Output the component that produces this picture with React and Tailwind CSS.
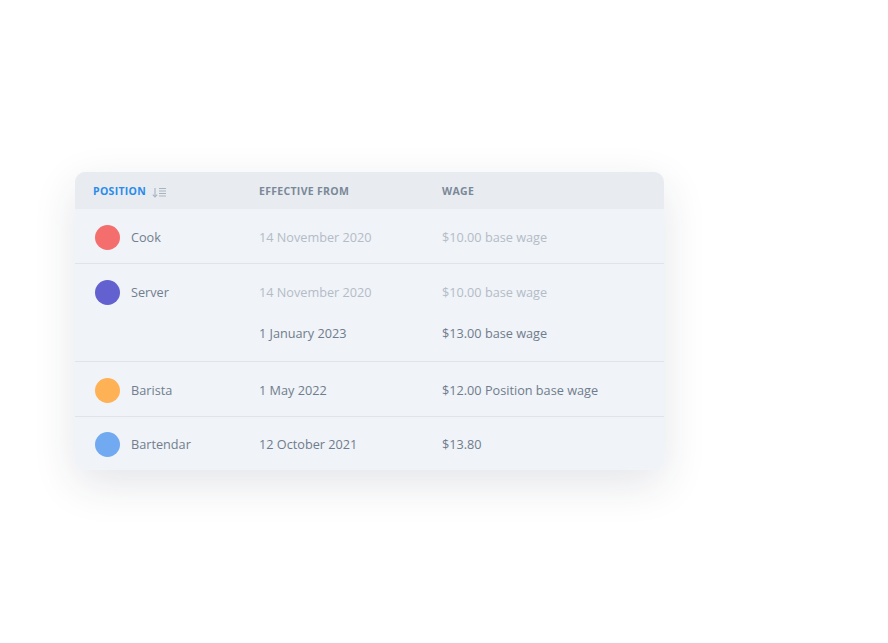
import React from 'react';

const rows = [
  {
    name: 'Cook',
    color: 'bg-[#f56e6e]',
    pad: 'pt-[16px] pb-[13px]',
    entries: [{ date: '14 November 2020', wage: '$10.00 base wage', past: true }],
  },
  {
    name: 'Server',
    color: 'bg-[#6261cf]',
    pad: 'pt-[16px] pb-[15px]',
    entries: [
      { date: '14 November 2020', wage: '$10.00 base wage', past: true },
      { date: '1 January 2023', wage: '$13.00 base wage' },
    ],
  },
  {
    name: 'Barista',
    color: 'bg-[#ffb156]',
    pad: 'pt-[16px] pb-[13px]',
    entries: [{ date: '1 May 2022', wage: '$12.00 Position base wage' }],
  },
  {
    name: 'Bartendar',
    color: 'bg-[#71aaf0]',
    pad: 'pt-[15px] pb-[13px]',
    entries: [{ date: '12 October 2021', wage: '$13.80' }],
  },
];

const SortIcon = () => (
  <svg width="15" height="11" viewBox="0 0 15 11" fill="none" stroke="currentColor" strokeWidth="1.1">
    <path d="M3 1v9M0.8 7.6L3 10l2.2-2.4" />
    <path d="M7 1.5h7M7 4h7M7 6.5h7M7 9h7" />
  </svg>
);

export default function App() {
  return (
    <div className="w-[888px] h-[643px] bg-white pt-[172px] pl-[75px]" style={{ fontFamily: '"Open Sans", sans-serif' }}>
      <div className="w-[589px] rounded-[10px] bg-[#f0f3f7] shadow-[0_14px_44px_rgba(30,45,70,0.12)] overflow-hidden">
        <div className="flex items-center h-[37px] pt-[3px] bg-[#e8ecf1] text-[10.5px] font-bold uppercase tracking-[0.3px] text-[#7b8898]">
          <div className="w-[184px] pl-[18px] flex items-center gap-[6px] text-[#2a8bea]">
            <span>Position</span>
            <span className="text-[#a9b3bf]"><SortIcon /></span>
          </div>
          <div className="w-[183px]">Effective from</div>
          <div>Wage</div>
        </div>
        {rows.map((row, i) => (
          <div key={row.name} className={`flex ${row.pad} ${i > 0 ? 'border-t border-[#dfe4ea]' : ''}`}>
            <div className="w-[184px] pl-[20px] flex items-start gap-[11px]">
              <div className={`w-[25px] h-[25px] rounded-full ${row.color}`} />
              <span className="text-[12.7px] leading-[25px] text-[#717e8f]">{row.name}</span>
            </div>
            <div className="flex flex-col gap-[16px]">
              {row.entries.map((e, j) => (
                <div key={j} className={`flex text-[12.7px] leading-[25px] ${e.past ? 'text-[#b3bcc7]' : 'text-[#6f7c8d]'}`}>
                  <div className="w-[183px]">{e.date}</div>
                  <div>{e.wage}</div>
                </div>
              ))}
            </div>
          </div>
        ))}
      </div>
    </div>
  );
}
